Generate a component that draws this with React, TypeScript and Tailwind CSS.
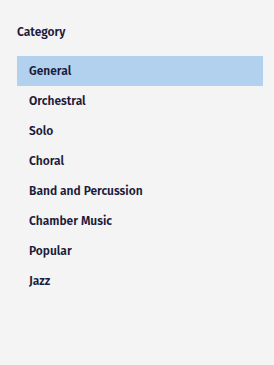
const categories = [
  "General",
  "Orchestral",
  "Solo",
  "Choral",
  "Band and Percussion",
  "Chamber Music",
  "Popular",
  "Jazz",
];

export default function App() {
  const active = "General";

  return (
    <div
      className="min-h-[365px] w-full bg-[#f4f4f4] pt-[24px] pl-[17px] pr-[11px] text-[#1c1b3c]"
      style={{ fontFamily: "'Fira Sans', 'Open Sans', 'Liberation Sans', sans-serif" }}
    >
      <h2 className="text-[12px] font-semibold leading-[16px]">Category</h2>
      <ul className="mt-[16px] flex flex-col">
        {categories.map((c) => (
          <li
            key={c}
            className={`flex h-[30px] items-center pl-[12px] text-[12px] font-semibold ${
              c === active ? "bg-[#b2d1ef]" : ""
            }`}
          >
            {c}
          </li>
        ))}
      </ul>
    </div>
  );
}
